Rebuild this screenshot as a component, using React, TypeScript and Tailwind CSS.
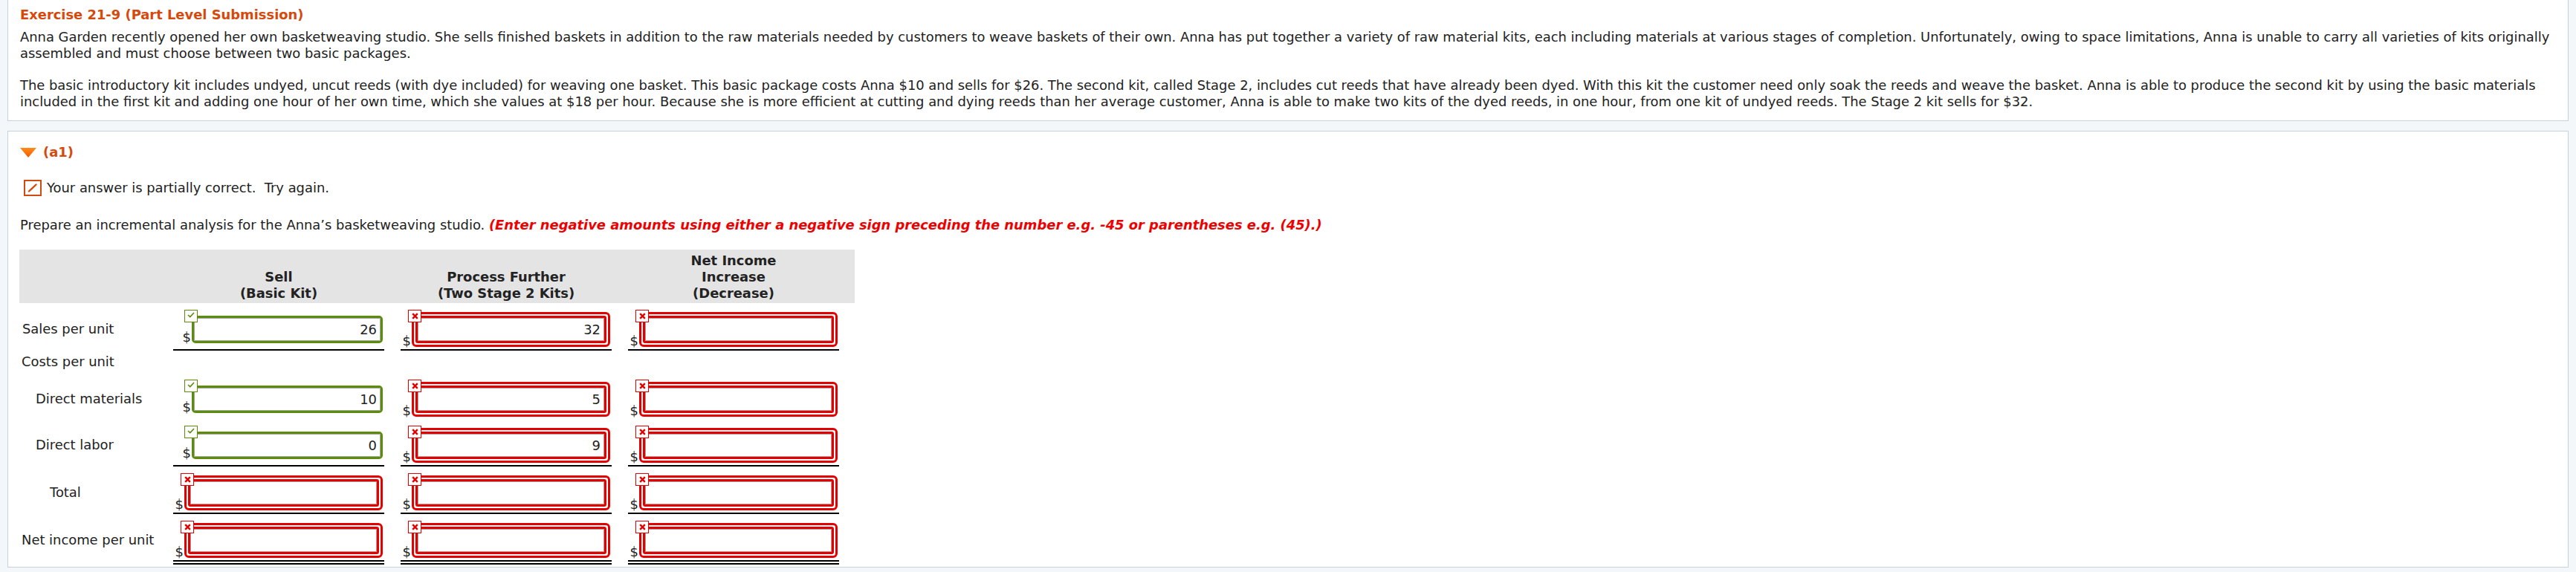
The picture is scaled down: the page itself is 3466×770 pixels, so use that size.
import React from 'react'

type Cell = { value?: string; ok: boolean }

const GREEN = '#5b8c0a'
const RED = '#e50000'

function Mark({ ok }: { ok: boolean }) {
  return (
    <div
      className={`absolute -left-[14px] -top-[12px] z-10 flex h-[17px] w-[18px] items-center justify-center bg-white border ${
        ok ? 'border-[#5b8c0a]' : 'border-[#e50000]'
      }`}
    >
      {ok ? (
        <svg width="10" height="8" viewBox="0 0 10 8" className="-mt-[2px]">
          <polyline points="1,4 3.8,6.6 9,1" fill="none" stroke={GREEN} strokeWidth="1.6" />
        </svg>
      ) : (
        <svg width="9" height="9" viewBox="0 0 9 9">
          <line x1="1.2" y1="1.2" x2="7.8" y2="7.8" stroke={RED} strokeWidth="2.4" />
          <line x1="7.8" y1="1.2" x2="1.2" y2="7.8" stroke={RED} strokeWidth="2.4" />
        </svg>
      )}
    </div>
  )
}

function Field({ cell }: { cell: Cell }) {
  const input = (
    <div className="relative h-[31px] w-[251px] border border-[#a3a3a3] bg-white pr-[4px] text-right leading-[29px]">
      <Mark ok={cell.ok} />
      {cell.value}
    </div>
  )
  return (
    <div className="flex items-end justify-end pr-[2px]">
      <span className="mb-[-1px] mr-[1px] leading-none">$</span>
      {cell.ok ? (
        <div className="rounded-[5px] border-[3px] border-[#5b8c0a]">{input}</div>
      ) : (
        <div className="rounded-[6px] border-[3px] border-[#e50000] bg-white p-[2px]">
          <div className="rounded-[3px] border-[3px] border-[#e50000]">{input}</div>
        </div>
      )}
    </div>
  )
}

function Row({
  label,
  indent,
  cells,
  line,
}: {
  label: string
  indent: string
  cells: Cell[]
  line: 'none' | 'single' | 'double'
}) {
  return (
    <div className="grid grid-cols-[196px_306px_306px_306px] pt-[8px]">
      <div className={`flex h-[54px] items-center self-start ${indent}`}>{label}</div>
      {cells.map((c, i) => (
        <div key={i} className="px-[11px]">
          <div className="flex h-[54px] items-center justify-end">
            <Field cell={c} />
          </div>
          {line === 'single' && <div className="h-[2px] bg-black" />}
          {line === 'double' && <div className="h-[6px] border-y-2 border-black" />}
        </div>
      ))}
    </div>
  )
}

export default function App() {
  return (
    <div className="min-h-[770px] bg-[#f4f7fa] font-['DejaVu_Sans',Verdana,sans-serif] text-[17.9px] leading-[22px] text-[#222]">
      <div className="mx-[10px] border-x border-b border-[#c8d2de] bg-white px-[16px] pt-[9px] pb-[14px]">
        <h1 className="font-bold text-[#d5490d]">Exercise 21-9 (Part Level Submission)</h1>
        <p className="mt-[8px] whitespace-nowrap">
          Anna Garden recently opened her own basketweaving studio. She sells finished baskets in addition to the raw
          materials needed by customers to weave baskets of their own. Anna has put together a variety of raw material
          kits, each including materials at various stages of completion. Unfortunately, owing to space limitations, Anna
          is unable to carry all varieties of kits originally
          <br />
          assembled and must choose between two basic packages.
        </p>
        <p className="mt-[21px] whitespace-nowrap">
          The basic introductory kit includes undyed, uncut reeds (with dye included) for weaving one basket. This basic
          package costs Anna $10 and sells for $26. The second kit, called Stage 2, includes cut reeds that have already
          been dyed. With this kit the customer need only soak the reeds and weave the basket. Anna is able to produce the
          second kit by using the basic materials
          <br />
          included in the first kit and adding one hour of her own time, which she values at $18 per hour. Because she is
          more efficient at cutting and dying reeds than her average customer, Anna is able to make two kits of the dyed
          reeds, in one hour, from one kit of undyed reeds. The Stage 2 kit sells for $32.
        </p>
      </div>

      <div className="mx-[10px] mt-[13px] border border-[#c8d2de] bg-white pl-[16px] pt-[17px] pb-[3px]">
        <div className="flex items-center gap-[9px]">
          <svg width="22" height="13" viewBox="0 0 22 13">
            <defs>
              <linearGradient id="tri" x1="0" y1="0" x2="0" y2="1">
                <stop offset="0" stopColor="#ff8c1a" />
                <stop offset="1" stopColor="#f25a00" />
              </linearGradient>
            </defs>
            <polygon points="0,0 22,0 11,13" fill="url(#tri)" />
          </svg>
          <span className="font-bold text-[#d5490d]">(a1)</span>
        </div>

        <div className="mt-[26px] flex items-center">
          <svg width="24" height="22" viewBox="0 0 24 22" className="ml-[5px]">
            <rect x="1" y="1" width="22" height="20" fill="white" stroke="#d24a0c" strokeWidth="2" />
            <line x1="7" y1="15.5" x2="16.5" y2="6.5" stroke="#d24a0c" strokeWidth="2.4" strokeLinecap="round" />
          </svg>
          <span className="ml-[7px] whitespace-pre">Your answer is partially correct.  Try again.</span>
        </div>

        <p className="mt-[28px]">
          Prepare an incremental analysis for the Anna’s basketweaving studio.{' '}
          <span className="font-bold italic text-[#ee0000]">
            (Enter negative amounts using either a negative sign preceding the number e.g. -45 or parentheses e.g. (45).)
          </span>
        </p>

        <div className="mt-[22px] -ml-[1px] w-[1124px]">
          <div className="grid h-[72px] grid-cols-[196px_306px_306px_306px] bg-[#e4e4e4] pb-[2px] font-bold">
            <div />
            <div className="flex flex-col items-center justify-end text-center">
              <span>Sell</span>
              <span>(Basic Kit)</span>
            </div>
            <div className="flex flex-col items-center justify-end text-center">
              <span>Process Further</span>
              <span>(Two Stage 2 Kits)</span>
            </div>
            <div className="flex flex-col items-center justify-end text-center">
              <span>Net Income</span>
              <span>Increase</span>
              <span>(Decrease)</span>
            </div>
          </div>

          <Row
            label="Sales per unit"
            indent="pl-[4px]"
            line="single"
            cells={[{ value: '26', ok: true }, { value: '32', ok: false }, { ok: false }]}
          />
          <div className="flex h-[30px] items-center pl-[3px]">Costs per unit</div>
          <Row
            label="Direct materials"
            indent="pl-[22px]"
            line="none"
            cells={[{ value: '10', ok: true }, { value: '5', ok: false }, { ok: false }]}
          />
          <Row
            label="Direct labor"
            indent="pl-[22px]"
            line="single"
            cells={[{ value: '0', ok: true }, { value: '9', ok: false }, { ok: false }]}
          />
          <Row label="Total" indent="pl-[41px]" line="single" cells={[{ ok: false }, { ok: false }, { ok: false }]} />
          <Row
            label="Net income per unit"
            indent="pl-[3px]"
            line="double"
            cells={[{ ok: false }, { ok: false }, { ok: false }]}
          />
        </div>
      </div>
    </div>
  )
}
